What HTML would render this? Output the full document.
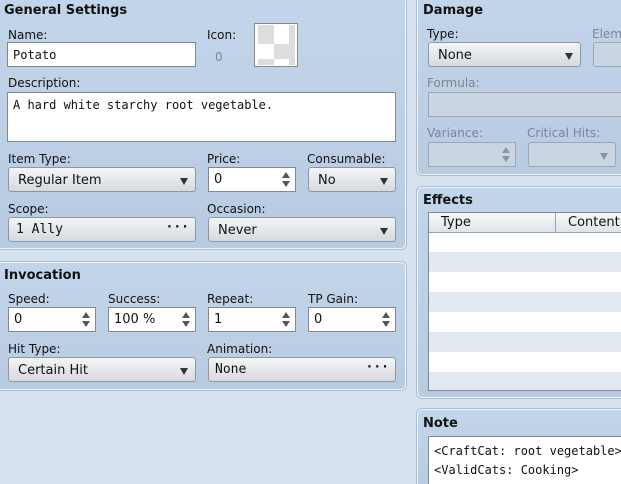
<!DOCTYPE html>
<html style="overflow:hidden;width:621px;height:484px"><head><style>
*{box-sizing:border-box;margin:0;padding:0}
body{width:621px;height:484px;overflow:hidden;background:#d6e2ef;font-family:"DejaVu Sans","Liberation Sans",sans-serif;font-size:12px;color:#111;position:relative}
.p{position:absolute;background:linear-gradient(#c3d5ea,#b8cbe0);border:1px solid #f2f6fb;border-radius:5px;box-shadow:0 0 0 1px #a9bbd0}
.a{position:absolute;white-space:nowrap}
.t{font-weight:bold;font-size:13px}
.g{color:#7a8595}
.in{position:absolute;background:#fff;border:1px solid #7f8790;height:25px;padding:5px 5px;font-family:"DejaVu Sans Mono","Liberation Mono",monospace;font-size:12px}
.num{font-family:"DejaVu Sans",sans-serif;font-size:13px;padding-top:4px}
.sel{position:absolute;height:25px;border:1px solid #8e969f;border-radius:3px;background:linear-gradient(#f4f5f7,#d6d9de);padding:5px 9px;font-size:13px}
.sel.dis{background:#c9d5e3;border-color:#9aa6b4}
.ar{position:absolute;right:7px;top:10px;width:0;height:0;border-left:4px solid transparent;border-right:4px solid transparent;border-top:7px solid #333}
.dis .ar{border-top-color:#8a93a0}
.dots{position:absolute;right:6px;top:2px;font-size:13px;font-weight:bold}
.sp{position:absolute;right:5px;top:4px;width:8px;height:15px}
.sp:before{content:"";position:absolute;top:0;left:0;border-left:4px solid transparent;border-right:4px solid transparent;border-bottom:6px solid #555}
.sp:after{content:"";position:absolute;bottom:0;left:0;border-left:4px solid transparent;border-right:4px solid transparent;border-top:6px solid #555}
.dis .sp:before{border-bottom-color:#8a93a0}.dis .sp:after{border-top-color:#8a93a0}
.lb{top:2px}
</style></head><body>
<div class="p" style="left:-6px;top:-6px;width:412px;height:255px"></div>
<div class="a t" style="left:4px;top:3px">General Settings</div>
<div class="a" style="left:8px;top:28px">Name:</div>
<div class="in" style="left:7px;top:42px;width:189px">Potato</div>
<div class="a" style="left:207px;top:28px">Icon:</div>
<div class="a g" style="left:215px;top:50px">0</div>
<div class="a" style="left:254px;top:23px;width:44px;height:44px;border:1px solid #888;background:#fff">
<div style="position:absolute;left:3px;top:1px;width:16px;height:19px;background:#ddd"></div>
<div style="position:absolute;left:19px;top:20px;width:15px;height:15px;background:#ddd"></div>
<div style="position:absolute;left:34px;top:1px;width:6px;height:34px;background:#ddd"></div>
<div style="position:absolute;left:3px;top:35px;width:16px;height:6px;background:#ddd"></div>
<div style="position:absolute;left:34px;top:35px;width:6px;height:6px;background:#ddd"></div>
</div>
<div class="a" style="left:8px;top:76px">Description:</div>
<div class="in" style="left:7px;top:92px;width:389px;height:50px">A hard white starchy root vegetable.</div>
<div class="a" style="left:8px;top:152px">Item Type:</div>
<div class="sel" style="left:8px;top:167px;width:188px">Regular Item<i class="ar"></i></div>
<div class="a" style="left:207px;top:152px">Price:</div>
<div class="in num" style="left:208px;top:167px;width:88px">0<i class="sp"></i></div>
<div class="a" style="left:307px;top:152px">Consumable:</div>
<div class="sel" style="left:308px;top:167px;width:88px">No<i class="ar"></i></div>
<div class="a" style="left:8px;top:202px">Scope:</div>
<div class="sel" style="left:8px;top:217px;width:188px;font-family:'DejaVu Sans Mono',monospace;font-size:13px;padding-left:7px;padding-top:4px">1 Ally<span class="dots">···</span></div>
<div class="a" style="left:207px;top:202px">Occasion:</div>
<div class="sel" style="left:208px;top:217px;width:188px">Never<i class="ar"></i></div>

<div class="p" style="left:-6px;top:262px;width:412px;height:128px"></div>
<div class="a t" style="left:4px;top:268px">Invocation</div>
<div class="a" style="left:8px;top:292px">Speed:</div>
<div class="a" style="left:108px;top:292px">Success:</div>
<div class="a" style="left:207px;top:292px">Repeat:</div>
<div class="a" style="left:308px;top:292px">TP Gain:</div>
<div class="in num" style="left:8px;top:307px;width:88px">0<i class="sp"></i></div>
<div class="in num" style="left:108px;top:307px;width:88px">100 %<i class="sp"></i></div>
<div class="in num" style="left:208px;top:307px;width:88px">1<i class="sp"></i></div>
<div class="in num" style="left:308px;top:307px;width:88px">0<i class="sp"></i></div>
<div class="a" style="left:8px;top:342px">Hit Type:</div>
<div class="sel" style="left:8px;top:357px;width:188px">Certain Hit<i class="ar"></i></div>
<div class="a" style="left:207px;top:342px">Animation:</div>
<div class="sel" style="left:208px;top:357px;width:188px;font-family:'DejaVu Sans Mono',monospace;font-size:13px;padding-left:6px;padding-top:4px">None<span class="dots">···</span></div>

<div class="p" style="left:417px;top:-6px;width:220px;height:181px"></div>
<div class="a t" style="left:423px;top:3px">Damage</div>
<div class="a" style="left:427px;top:27px">Type:</div>
<div class="sel" style="left:428px;top:42px;width:153px">None<i class="ar"></i></div>
<div class="a g" style="left:592px;top:27px">Elem</div>
<div class="sel dis" style="left:593px;top:42px;width:40px"></div>
<div class="a g" style="left:427px;top:76px">Formula:</div>
<div class="in" style="left:428px;top:92px;width:200px;background:#c9d5e3;border-color:#9aa6b4"></div>
<div class="a g" style="left:427px;top:126px">Variance:</div>
<div class="a g" style="left:527px;top:126px">Critical Hits:</div>
<div class="in dis" style="left:428px;top:142px;width:88px;background:#c9d5e3;border-color:#9aa6b4"><i class="sp"></i></div>
<div class="sel dis" style="left:528px;top:142px;width:88px"><i class="ar"></i></div>

<div class="p" style="left:417px;top:187px;width:220px;height:211px"></div>
<div class="a t" style="left:423px;top:193px">Effects</div>
<div class="a" style="left:428px;top:212px;width:200px;height:179px;border:1px solid #7f8790;background:repeating-linear-gradient(#fff 0 20px,#e3e9f1 20px 40px);background-position:0 19px;overflow:hidden">
<div style="height:20px;background:linear-gradient(#f8f9fb,#dfe3e8);border-bottom:1px solid #9aa2ab;font-size:13px;position:relative">
<span style="position:absolute;left:12px;top:2px">Type</span>
<span style="position:absolute;left:126px;top:0;height:20px;border-left:1px solid #9aa2ab"></span>
<span style="position:absolute;left:139px;top:2px">Content</span></div>
</div>

<div class="p" style="left:417px;top:409px;width:220px;height:80px"></div>
<div class="a t" style="left:423px;top:416px">Note</div>
<div class="in" style="left:428px;top:436px;width:200px;height:52px;line-height:19px;padding:5px 5px">&lt;CraftCat: root vegetable&gt;<br>&lt;ValidCats: Cooking&gt;</div>
</body></html>
